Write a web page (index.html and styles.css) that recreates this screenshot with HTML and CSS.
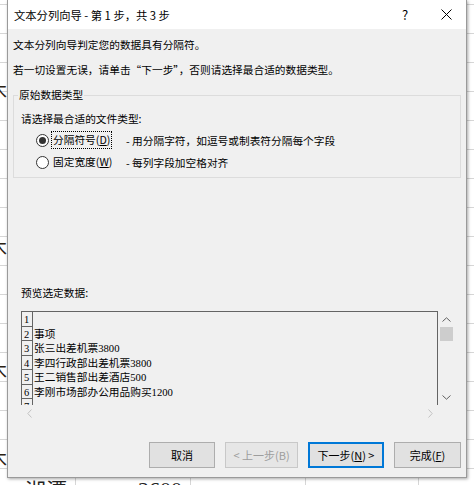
FILE: index.html
```html
<!DOCTYPE html>
<html lang="zh-CN">

<head>
    <meta charset="UTF-8">
    <meta name="viewport" content="width=device-width, initial-scale=1.0">
    <title>文本分列向导</title>
    <link rel="stylesheet" href="styles.css">
</head>

<body>
    <!-- 背后的表格 -->
    <div class="sheet">
        <span class="sheetChar s1">木</span>
        <span class="sheetChar s2">木</span>
        <span class="sheetChar s3">木</span>
        <span class="sheetChar s4">木</span>
        <div class="sheetRow">
            <span class="sheetCell c1"><span class="bigTxt">湘潭</span></span>
            <span class="sheetCell c2"><span class="bigNum">2600</span></span>
            <span class="sheetCell c3"></span>
            <span class="sheetCell c4"></span>
        </div>
    </div>

    <div class="dialog">
        <div class="titleBar">
            <span class="title">文本分列向导 - 第 1 步，共 3 步</span>
            <span class="tbBtn help">?</span>
            <span class="tbBtn close">
                <svg width="11" height="11" viewBox="0 0 11 11">
                    <path d="M0.5 0.5 L10.5 10.5 M10.5 0.5 L0.5 10.5" stroke="#000" stroke-width="1" fill="none" />
                </svg>
            </span>
        </div>

        <div class="body">
            <p class="line">文本分列向导判定您的数据具有分隔符。</p>
            <p class="line">若一切设置无误，请单击“下一步”，否则请选择最合适的数据类型。</p>

            <fieldset class="group">
                <legend>原始数据类型</legend>
                <div class="prompt">请选择最合适的文件类型:</div>
                <div class="opt">
                    <span class="radio checked"></span>
                    <span class="optLabel"><span class="focus">分隔符号(<u>D</u>)</span></span>
                    <span class="optDesc">- 用分隔字符，如逗号或制表符分隔每个字段</span>
                </div>
                <div class="opt">
                    <span class="radio"></span>
                    <span class="optLabel"><span class="focus off">固定宽度(<u>W</u>)</span></span>
                    <span class="optDesc">- 每列字段加空格对齐</span>
                </div>
            </fieldset>

            <div class="previewLabel">预览选定数据:</div>

            <div class="preview">
                <div class="grid">
                    <div class="row"><span class="num">1</span><span class="txt"></span></div>
                    <div class="row"><span class="num">2</span><span class="txt">事项</span></div>
                    <div class="row"><span class="num">3</span><span class="txt">张三出差机票3800</span></div>
                    <div class="row"><span class="num">4</span><span class="txt">李四行政部出差机票3800</span></div>
                    <div class="row"><span class="num">5</span><span class="txt">王二销售部出差酒店500</span></div>
                    <div class="row"><span class="num">6</span><span class="txt">李刚市场部办公用品购买1200</span></div>
                    <div class="row"><span class="num">7</span><span class="txt"></span></div>
                </div>
                <div class="vScroll">
                    <span class="arrow">
                        <svg width="9" height="5" viewBox="0 0 9 5">
                            <path d="M0.5 4.5 L4.5 0.8 L8.5 4.5" stroke="#606060" fill="none" />
                        </svg>
                    </span>
                    <span class="thumb"></span>
                    <span class="track"></span>
                    <span class="arrow">
                        <svg width="9" height="5" viewBox="0 0 9 5">
                            <path d="M0.5 0.5 L4.5 4.2 L8.5 0.5" stroke="#606060" fill="none" />
                        </svg>
                    </span>
                </div>
            </div>

            <div class="hScroll">
                <span class="arrow">
                    <svg width="5" height="9" viewBox="0 0 5 9">
                        <path d="M4.5 0.5 L0.8 4.5 L4.5 8.5" stroke="#c2c2c2" fill="none" />
                    </svg>
                </span>
                <span class="arrow">
                    <svg width="5" height="9" viewBox="0 0 5 9">
                        <path d="M0.5 0.5 L4.2 4.5 L0.5 8.5" stroke="#c2c2c2" fill="none" />
                    </svg>
                </span>
            </div>

            <div class="buttons">
                <button class="btn b1">取消</button>
                <button class="btn b2 disabled">&lt; 上一步(B)</button>
                <button class="btn b3 primary">下一步(<u>N</u>) &gt;</button>
                <button class="btn b4">完成(<u>F</u>)</button>
            </div>
        </div>
    </div>
</body>

</html>
```

FILE: styles.css
```css
body {
    margin: 0;
    padding: 0;
    position: relative;
    height: 485px;
    overflow: hidden;
    background-color: white;
    font-family: "Noto Sans CJK SC", sans-serif;
    font-size: 10.7px;
    color: #000;
}

/* 背后的表格 */
.sheet {
    position: absolute;
    left: 0;
    top: 0;
    right: 0;
    bottom: 0;
    background-image: repeating-linear-gradient(to bottom, transparent 0, transparent 4px, #d6d6d6 4px, #d6d6d6 5px, transparent 5px, transparent 29px);
}

.sheetChar {
    position: absolute;
    left: -12px;
    font-size: 19px;
    line-height: 20px;
    color: #2b2112;
}

.s1 { top: 80px; }
.s2 { top: 237px; }
.s3 { top: 360px; }
.s4 { top: 448px; }

.sheetRow {
    position: absolute;
    left: 0;
    top: 478px;
    height: 30px;
    display: flex;
    background-color: white;
}

.sheetCell {
    height: 30px;
    border-right: 1px solid #d6d6d6;
    overflow: hidden;
}

.c1 { width: 75px; }
.c2 { width: 114px; }
.c3 { width: 114px; }
.c4 { width: 112px; }

.bigTxt {
    display: block;
    margin: 0 0 0 25px;
    font-size: 21px;
    line-height: 21px;
    padding-top: 1px;
    color: #222;
}

.bigNum {
    display: block;
    margin-left: 62px;
    font-family: "Liberation Serif", serif;
    font-size: 22px;
    line-height: 22px;
    padding-top: 1px;
    color: #222;
}

/* 对话框 */
.dialog {
    position: relative;
    z-index: 1;
    margin-left: 7px;
    width: 460px;
    height: 478px;
    box-sizing: border-box;
    border: 1px solid #9a9a9a;
    border-top: none;
    box-shadow: 1px 1px 3px rgba(0, 0, 0, 0.35);
    display: flex;
    flex-direction: column;
}

.titleBar {
    height: 29px;
    background-color: white;
    display: flex;
    align-items: center;
    padding-left: 6px;
}

.title {
    font-size: 11.3px;
}

.tbBtn {
    height: 29px;
    display: flex;
    align-items: center;
    justify-content: center;
}

.help {
    margin-left: auto;
    width: 42px;
    font-size: 13px;
}

.close {
    width: 40px;
}

.body {
    flex: 1;
    background-color: #f0f0f0;
    padding: 0 5px 9px 5px;
    display: flex;
    flex-direction: column;
}

.line {
    margin: 7px 0 0 0;
    line-height: 18px;
}

.group {
    margin: 7px 0 0 0;
    padding: 0 0 5px 0;
    border: 1px solid #dcdcdc;
    min-width: 0;
}

.group legend {
    margin-left: 4px;
    padding: 0 1px;
    line-height: 18px;
}

.prompt {
    margin-top: 6px;
    padding-left: 7px;
    line-height: 18px;
}

.opt {
    display: flex;
    align-items: center;
    height: 20px;
    margin-top: 2px;
}

.radio {
    margin-left: 22px;
    width: 13px;
    height: 13px;
    box-sizing: border-box;
    border: 1px solid #333;
    border-radius: 50%;
    background-color: white;
    display: flex;
    align-items: center;
    justify-content: center;
}

.radio.checked::after {
    content: "";
    width: 7px;
    height: 7px;
    border-radius: 50%;
    background-color: #333;
}

.optLabel {
    width: 77px;
}

.focus {
    display: inline-block;
    margin-left: 2px;
    padding: 0 1px;
    line-height: 16px;
    border: 1px dotted #000;
}

.focus.off {
    border-color: transparent;
}

.previewLabel {
    margin-top: 106px;
    padding-left: 8px;
    line-height: 18px;
}

.preview {
    margin: 9px 0 0 8px;
    height: 94px;
    display: flex;
}

.grid {
    width: 417px;
    box-sizing: border-box;
    border: 1px solid #646464;
    border-bottom: none;
    overflow: hidden;
}

.row {
    display: flex;
    height: 14.5px;
}

.num {
    width: 11px;
    flex-shrink: 0;
    box-sizing: border-box;
    border-right: 1px solid #646464;
    border-bottom: 1px solid #646464;
    padding-left: 2px;
    font-family: "Liberation Serif", serif;
    font-size: 10.5px;
    line-height: 16px;
}

.txt {
    padding-left: 1px;
    font-family: "Liberation Serif", "Noto Sans CJK SC", serif;
    font-size: 10.7px;
    line-height: 15px;
    white-space: nowrap;
}

.vScroll {
    width: 17px;
    display: flex;
    flex-direction: column;
    align-items: center;
}

.vScroll .arrow {
    height: 16px;
    display: flex;
    align-items: center;
    justify-content: center;
}

.thumb {
    width: 13px;
    height: 14px;
    background-color: #cdcdcd;
}

.track {
    flex: 1;
}

.hScroll {
    margin-left: 8px;
    width: 417px;
    height: 16px;
    display: flex;
    justify-content: space-between;
    align-items: center;
}

.hScroll .arrow {
    width: 16px;
    display: flex;
    justify-content: center;
}

.buttons {
    margin-top: auto;
    display: flex;
    justify-content: flex-end;
    gap: 10px;
}

.btn {
    height: 26px;
    padding: 0;
    font-family: "Noto Sans CJK SC", sans-serif;
    font-size: 11px;
    color: #000;
    background-color: #e1e1e1;
    border: 1px solid #adadad;
}

.b1 { width: 66px; }
.b2 { width: 73px; }
.b3 { width: 76px; }
.b4 { width: 67px; }

.disabled {
    color: #9d9d9d;
    background-color: #e6e6e6;
    border-color: #c8c8c8;
}

.primary {
    border-color: #0078d7;
    box-shadow: inset 0 0 0 1px #0078d7;
}
```
